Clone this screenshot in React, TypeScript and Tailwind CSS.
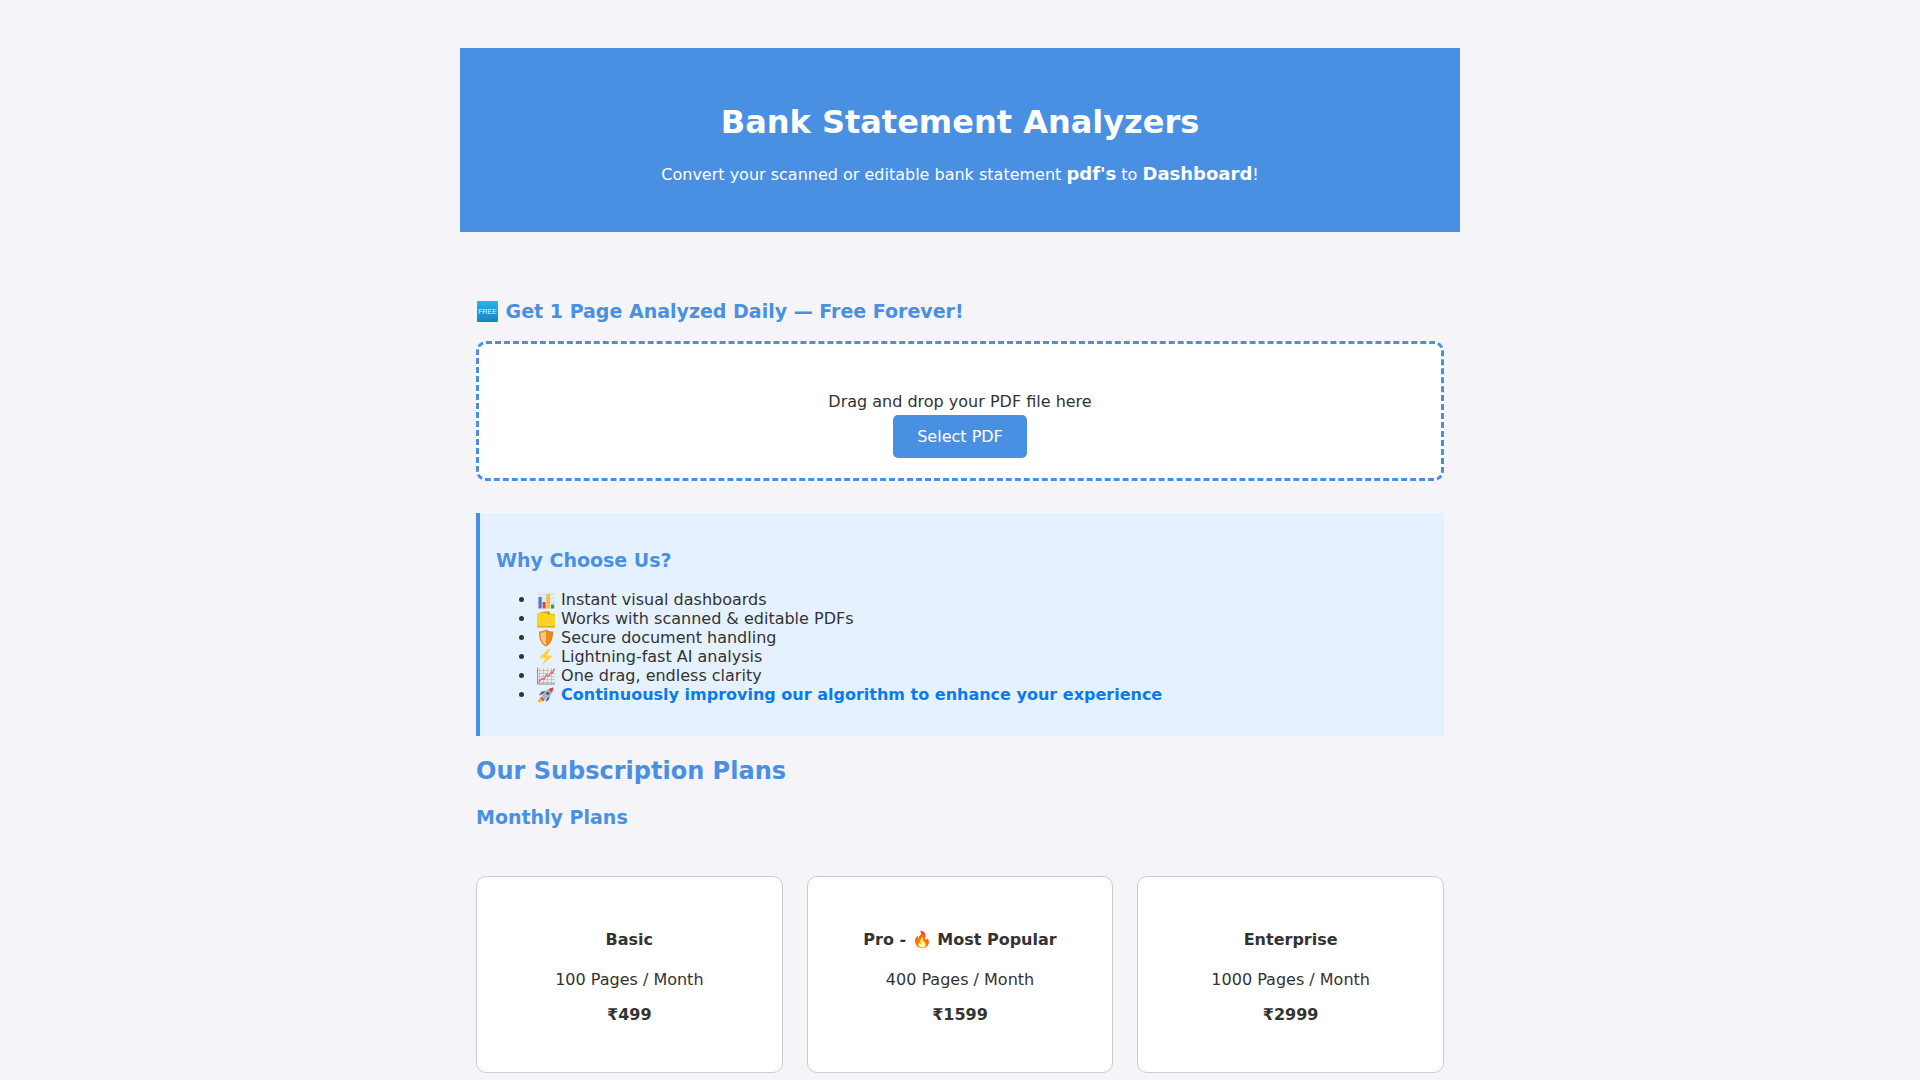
import type { ReactNode } from 'react'

function Emoji({ label, children }: { label: string; children: ReactNode }) {
	return (
		<svg role="img" aria-label={label} viewBox="0 0 20 18" className="inline h-[18px] w-5 align-[-4px]">
			{children}
		</svg>
	)
}

function FreeIcon() {
	return (
		<svg role="img" aria-label="Free" viewBox="0 0 23 22" className="inline h-[22px] w-[23px] align-[-4px]">
			<defs>
				<linearGradient id="free" x1="0" y1="0" x2="0" y2="1">
					<stop offset="0" stopColor="#29b3ea" />
					<stop offset="1" stopColor="#1584c6" />
				</linearGradient>
			</defs>
			<rect x="1" y="1" width="21" height="21" rx="1" fill="url(#free)" />
			<text
				x="11.5"
				y="14"
				textAnchor="middle"
				fontSize="7"
				fontWeight="400"
				fontFamily="Liberation Sans, sans-serif"
				fill="#dff4ff"
			>
				FREE
			</text>
		</svg>
	)
}

const gridLines = 'M1 3.5H19M1 6.5H19M1 9.5H19M1 12.5H19M1 15.5H19M3.5 1V17.5M7.5 1V17.5M11.5 1V17.5M15.5 1V17.5'

const features = [
	{
		icon: (
			<Emoji label="Bar chart">
				<rect x="1" y="0.5" width="18" height="17" fill="#e7eaf0" />
				<path d="M1 3.5H19M1 7.5H19M1 11.5H19" stroke="#cfd5de" strokeWidth="0.6" />
				<rect x="2.5" y="6" width="3.2" height="11.5" fill="#4778d0" />
				<rect x="6.6" y="11" width="3" height="6.5" fill="#d9434c" />
				<rect x="10.3" y="3" width="3.8" height="14.5" fill="#f2c043" />
				<rect x="15" y="13.5" width="3.2" height="4" fill="#3f9a4c" />
			</Emoji>
		),
		text: 'Instant visual dashboards'
	},
	{
		icon: (
			<Emoji label="Folder">
				<path d="M1 3.5L9 1.5H14V4H19V17H1Z" fill="#d99a13" />
				<path d="M1 3H10L12 4.5H19V16.5H1Z" fill="#fbd320" />
				<path d="M1 17H19" stroke="#d9a313" strokeWidth="1" />
			</Emoji>
		),
		text: 'Works with scanned & editable PDFs'
	},
	{
		icon: (
			<Emoji label="Shield">
				<path d="M10 0.5C8 2 5.5 2.5 3 2.5C2.7 9 4.5 15 10 17.5C15.5 15 17.3 9 17 2.5C14.5 2.5 12 2 10 0.5Z" fill="#d9852c" />
				<path d="M10 2C8.3 3.2 6.3 3.7 4.3 3.7C4.2 9 5.7 13.8 10 16.2Z" fill="#ffc477" />
				<path d="M10 2C11.7 3.2 13.7 3.7 15.7 3.7C15.8 9 14.3 13.8 10 16.2Z" fill="#f08a1d" />
			</Emoji>
		),
		text: 'Secure document handling'
	},
	{
		icon: (
			<Emoji label="Lightning">
				<path d="M12.5 1L3.5 9.5L9.5 10.5L5.5 17.5L16.5 8L10.5 7.2L14.5 1.5Z" fill="#fdd23e" />
			</Emoji>
		),
		text: 'Lightning-fast AI analysis'
	},
	{
		icon: (
			<Emoji label="Rising chart">
				<rect x="1" y="0.5" width="18" height="17" fill="#eceef1" />
				<path d={gridLines} stroke="#b3b7be" strokeWidth="0.7" />
				<path d="M1.5 0.5V17H19" fill="none" stroke="#8d9199" strokeWidth="1" />
				<path d="M2.5 15L6 11.5L8 12.5L10.5 7.5L13 9L15.5 5L16.5 6L18.5 1.5" fill="none" stroke="#dc6262" strokeWidth="1.2" />
			</Emoji>
		),
		text: 'One drag, endless clarity'
	}
]

const monthlyPlans = [
	{ name: 'Basic', pages: '100 Pages / Month', price: '₹499' },
	{ name: 'Pro - 🔥 Most Popular', pages: '400 Pages / Month', price: '₹1599' },
	{ name: 'Enterprise', pages: '1000 Pages / Month', price: '₹2999' }
]

function RocketIcon() {
	return (
		<Emoji label="Rocket">
			<path d="M2 16.5C2 13 4 11 6 11L8.5 13.5C8 15.5 5.5 16 2 16.5Z" fill="#f7b52c" />
			<path d="M7 8L3 9.5L5.5 5.5L10 5ZM11 12L9.5 16L13 13.5L14 9Z" fill="#4d6577" />
			<path d="M5.5 11L8.5 14C13 12 16.5 8 17.5 1.5C11.5 2.5 7.5 6 5.5 11Z" fill="#a9b5bf" />
			<path d="M12.5 3.2L15.8 6.5C16.8 4.8 17.3 3.2 17.5 1.5C15.8 1.7 14.2 2.2 12.5 3.2Z" fill="#dd3c49" />
			<circle cx="11.8" cy="7.3" r="1.6" fill="#3d5871" />
			<path d="M5.5 11L8.5 14L7.5 15L4.5 12Z" fill="#c93c46" />
		</Emoji>
	)
}

function Hero() {
	return (
		<header className="bg-[#4a90e2] px-4 pt-14 pb-[45px] text-center text-white">
			<h1 className="text-[32px] leading-[36px] font-bold">Bank Statement Analyzers</h1>
			<p className="mt-[22px] leading-[24px]">
				Convert your scanned or editable bank statement <strong className="text-[18px]">pdf's</strong> to{' '}
				<strong className="text-[18px]">Dashboard</strong>!
			</p>
		</header>
	)
}

function UploadBox() {
	return (
		<div className="mt-[19px] flex flex-col items-center rounded-[10px] border-3 border-dashed border-[#4a90e2] bg-white px-5 pt-12 pb-5">
			<p>Drag and drop your PDF file here</p>
			<button type="button" className="mt-1 rounded-[5px] bg-[#4a90e2] px-6 py-3 text-white">
				Select PDF
			</button>
		</div>
	)
}

function WhyChooseUs() {
	return (
		<section className="mt-8 border-l-4 border-[#4a90e2] bg-[#e5f1ff] px-4 pt-9 pb-8">
			<h3 className="text-[19px] leading-[22px] font-bold text-[#4a90e2]">Why Choose Us?</h3>
			<ul className="mt-[19px] list-disc pl-10">
				{features.map(({ icon, text }) => (
					<li key={text}>
						{icon} {text}
					</li>
				))}
				<li>
					<RocketIcon />{' '}
					<strong className="text-[#0a7aee]">Continuously improving our algorithm to enhance your experience</strong>
				</li>
			</ul>
		</section>
	)
}

function Plans() {
	return (
		<section className="mt-[21px]">
			<h2 className="text-[24px] leading-[28px] font-bold text-[#4a90e2]">Our Subscription Plans</h2>
			<h3 className="mt-[21px] text-[19px] leading-[22px] font-bold text-[#4a90e2]">Monthly Plans</h3>
			<div className="mt-12 grid grid-cols-3 gap-6">
				{monthlyPlans.map((plan) => (
					<div
						key={plan.name}
						className="rounded-[10px] border border-[#cccccc] bg-white px-4 pt-[53px] pb-12 text-center"
					>
						<h4 className="font-bold">{plan.name}</h4>
						<p className="mt-[21px]">{plan.pages}</p>
						<p className="mt-4 font-bold">{plan.price}</p>
					</div>
				))}
			</div>
		</section>
	)
}

export default function App() {
	return (
		<div className="min-h-screen bg-[#f4f4f9] pt-12 font-['DejaVu_Sans',Verdana,sans-serif] text-[16px] leading-[19px] text-[#333333]">
			<div className="mx-auto max-w-[1000px]">
				<Hero />
				<main className="px-4 pt-[68px]">
					<h3 className="text-[19px] leading-[22px] font-bold text-[#4a90e2]">
						<FreeIcon /> Get 1 Page Analyzed Daily — Free Forever!
					</h3>
					<UploadBox />
					<WhyChooseUs />
					<Plans />
				</main>
			</div>
		</div>
	)
}
